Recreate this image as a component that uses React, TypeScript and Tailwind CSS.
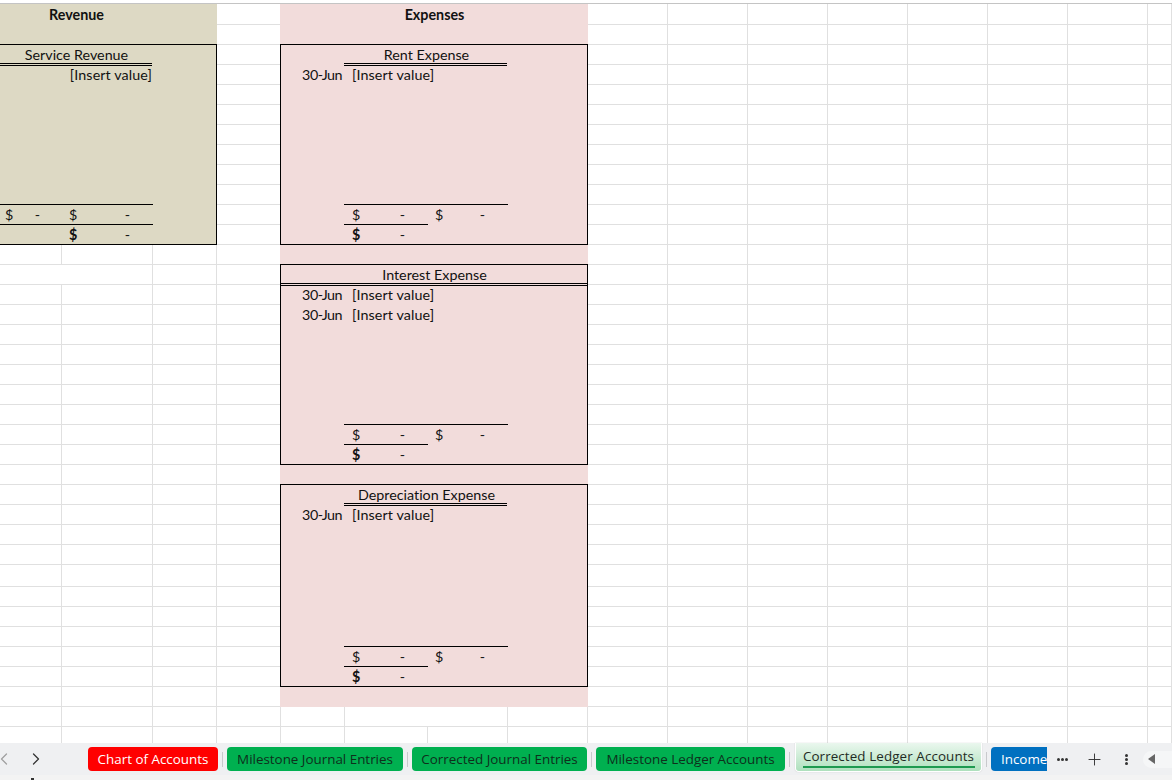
import { ChevronLeft, ChevronRight, Plus } from "lucide-react";

const COLS = 16;
const ROWS = 38;

const sheetFont = "font-['Lato','Liberation_Sans',sans-serif] text-[14.3px] text-[#111] [font-variant-ligatures:none]";
const tabFont = "font-['Open_Sans','Liberation_Sans',sans-serif] text-[13.4px]";

function Text({ className, children }: { className: string; children: React.ReactNode }) {
  return <div className={`flex items-center whitespace-nowrap ${className}`}>{children}</div>;
}

function Amount({ className, bold }: { className: string; bold?: boolean }) {
  return (
    <div className={`flex items-center justify-between ${className}`}>
      <span className={bold ? "font-bold" : ""}>$</span>
      <span>-</span>
    </div>
  );
}

function ExpenseBoxes() {
  return (
    <>
      {/* Rent Expense */}
      <div className="col-start-5 col-end-9 row-start-4 row-end-14 -ml-px -mt-px border border-black" />
      <Text className="col-start-6 col-end-8 row-start-4 justify-center">Rent Expense</Text>
      <div className="col-start-6 col-end-8 row-start-4 self-end -ml-px mr-px -mb-[1px] h-[3px] border-y border-black" />
      <Text className="col-start-5 row-start-5 justify-end pr-[3px] tracking-[-0.5px]">30-Jun</Text>
      <Text className="col-start-6 col-end-8 row-start-5 pl-[7px] tracking-[0.1px]">[Insert value]</Text>
      <div className="col-start-6 col-end-8 row-start-11 -ml-px border-b border-black" />
      <Amount className="col-start-6 row-start-12 -ml-px border-b border-black pl-[8px] pr-[23px]" />
      <Amount className="col-start-7 row-start-12 pl-[7px] pr-[23px]" />
      <Amount className="col-start-6 row-start-13 -ml-px pl-[8px] pr-[23px]" bold />

      {/* Interest Expense */}
      <div className="col-start-5 col-end-9 row-start-15 row-end-25 -ml-px -mt-px border border-black" />
      <Text className="col-start-5 col-end-9 row-start-15 justify-center">Interest Expense</Text>
      <div className="col-start-5 col-end-9 row-start-15 self-end -ml-px -mb-[1px] h-[3px] border-y border-black" />
      <Text className="col-start-5 row-start-16 justify-end pr-[3px] tracking-[-0.5px]">30-Jun</Text>
      <Text className="col-start-6 col-end-8 row-start-16 pl-[7px] tracking-[0.1px]">[Insert value]</Text>
      <Text className="col-start-5 row-start-17 justify-end pr-[3px] tracking-[-0.5px]">30-Jun</Text>
      <Text className="col-start-6 col-end-8 row-start-17 pl-[7px] tracking-[0.1px]">[Insert value]</Text>
      <div className="col-start-6 col-end-8 row-start-22 -ml-px border-b border-black" />
      <Amount className="col-start-6 row-start-23 -ml-px border-b border-black pl-[8px] pr-[23px]" />
      <Amount className="col-start-7 row-start-23 pl-[7px] pr-[23px]" />
      <Amount className="col-start-6 row-start-24 -ml-px pl-[8px] pr-[23px]" bold />

      {/* Depreciation Expense */}
      <div className="col-start-5 col-end-9 row-start-26 row-end-36 -ml-px -mt-px border border-black" />
      <Text className="col-start-6 col-end-8 row-start-26 justify-center">Depreciation Expense</Text>
      <div className="col-start-6 col-end-8 row-start-26 self-end -ml-px mr-px -mb-[1px] h-[3px] border-y border-black" />
      <Text className="col-start-5 row-start-27 justify-end pr-[3px] tracking-[-0.5px]">30-Jun</Text>
      <Text className="col-start-6 col-end-8 row-start-27 pl-[7px] tracking-[0.1px]">[Insert value]</Text>
      <div className="col-start-6 col-end-8 row-start-33 -ml-px border-b border-black" />
      <Amount className="col-start-6 row-start-34 -ml-px border-b border-black pl-[8px] pr-[23px]" />
      <Amount className="col-start-7 row-start-34 pl-[7px] pr-[23px]" />
      <Amount className="col-start-6 row-start-35 -ml-px pl-[8px] pr-[23px]" bold />
    </>
  );
}

function cellClass(r: number, c: number) {
  if (r === 0) return "border-b border-[#c4c4c4]";
  if (r === ROWS - 1) return "border-r border-[#e0e0e0]";
  // merged cells have no inner line
  if ((r === 14 && c === 0) || (r === 36 && c === 5)) return "border-b border-[#e0e0e0]";
  return "border-r border-b border-[#e0e0e0]";
}

function Sheet() {
  const cells = [];
  for (let r = 0; r < ROWS; r++) {
    for (let c = 0; c < COLS; c++) {
      cells.push(<div key={`${r}-${c}`} className={cellClass(r, c)} style={{ gridRow: r + 1, gridColumn: c + 1 }} />);
    }
  }

  return (
    <div className={`grid grid-cols-[62px_91px_64px_64px_64px_83px_80px_80px_80px_80px_80px_80px_80px_80px_80px_24px] grid-rows-[4px_21px_repeat(27,20px)_22px_repeat(7,20px)_16px] overflow-hidden ${sheetFont}`}>
      {cells}

      {/* fills */}
      <div className="col-start-1 col-end-4 row-start-2 row-end-14 bg-[#ddd9c4]" />
      <div className="col-start-5 col-end-9 row-start-2 row-end-37 -ml-px bg-[#f2dcdb]" />

      {/* Revenue */}
      <Text className="col-start-1 col-end-3 row-start-2 justify-center font-bold">Revenue</Text>
      <div className="col-start-1 col-end-4 row-start-4 row-end-14 -mt-px border-y border-r border-black" />
      <Text className="col-start-1 col-end-3 row-start-4 justify-center">Service Revenue</Text>
      <div className="col-start-1 col-end-3 row-start-4 self-end mr-px -mb-[1px] h-[3px] border-y border-black" />
      <Text className="col-start-2 row-start-5 justify-end pr-px tracking-[0.1px]">[Insert value]</Text>
      <div className="col-start-1 col-end-3 row-start-11 border-b border-black" />
      <Amount className="col-start-1 row-start-12 border-b border-black pl-[5px] pr-[22px]" />
      <Amount className="col-start-2 row-start-12 border-b border-black pl-[7px] pr-[23px]" />
      <Amount className="col-start-2 row-start-13 pl-[7px] pr-[23px]" bold />

      {/* Expenses */}
      <Text className="col-start-5 col-end-9 row-start-2 justify-center font-bold">Expenses</Text>
      <ExpenseBoxes />
    </div>
  );
}

function Sep() {
  return <div className="mx-[4px] h-[15px] w-px shrink-0 bg-[#c8c9cc]" />;
}

function Tab({ className, label }: { className: string; label: string }) {
  return (
    <div className={`flex h-[24px] shrink-0 items-center justify-center overflow-hidden rounded-[4px] whitespace-nowrap ${className}`}>
      {label}
    </div>
  );
}

function TabBar() {
  return (
    <div className={`flex h-[32px] items-center bg-[#eff0f2] ${tabFont}`}>
      <ChevronLeft className="ml-[-6px] h-[20px] w-[20px] shrink-0 text-[#a0a0a0]" strokeWidth={1.5} />
      <ChevronRight className="ml-[12px] h-[20px] w-[20px] shrink-0 text-[#333]" strokeWidth={1.5} />
      <Tab className="ml-[42px] w-[130px] bg-[#ff0000] text-white" label="Chart of Accounts" />
      <Sep />
      <Tab className="w-[176px] bg-[#00b050] text-[#0e2f1c]" label="Milestone Journal Entries" />
      <Sep />
      <Tab className="w-[175px] bg-[#00b050] text-[#0e2f1c]" label="Corrected Journal Entries" />
      <Sep />
      <Tab className="w-[189px] bg-[#00b050] text-[#0e2f1c]" label="Milestone Ledger Accounts" />
      <Sep />
      <div className="-mt-[3px] ml-px flex h-[29px] w-[187px] shrink-0 flex-col items-center rounded-b-[4px] border-x border-b border-white bg-gradient-to-b from-[#eaf7ee] to-[#aee0bd] font-medium tracking-[0.1px] text-[#1f2a24] shadow-[0_0_1px_#aaa]">
        <span className="mt-[3px] leading-[20px] whitespace-nowrap">Corrected Ledger Accounts</span>
        <div className="h-[2px] w-[172px] bg-[#1e9a50]" />
      </div>
      <Sep />
      <div className="flex h-[24px] w-[56px] shrink-0 items-center overflow-hidden rounded-l-[4px] bg-[#0070c0] pl-[10px] text-white">Income</div>
      <div className="ml-[10px] flex h-[16px] w-[11px] shrink-0 items-center justify-between">
        <span className="h-[3px] w-[3px] rounded-full bg-[#333]" />
        <span className="h-[3px] w-[3px] rounded-full bg-[#333]" />
        <span className="h-[3px] w-[3px] rounded-full bg-[#333]" />
      </div>
      <Plus className="ml-[17px] h-[19px] w-[19px] shrink-0 text-[#333]" strokeWidth={1.2} />
      <div className="ml-[21px] flex h-[11px] shrink-0 flex-col justify-between">
        <span className="h-[3px] w-[3px] rounded-full bg-[#333]" />
        <span className="h-[3px] w-[3px] rounded-full bg-[#333]" />
        <span className="h-[3px] w-[3px] rounded-full bg-[#333]" />
      </div>
      <div className="ml-[15px] flex h-[17px] flex-1 items-center rounded-l-full bg-[#f5f6f7] pl-[5px]">
        <div className="h-0 w-0 border-y-[5px] border-r-[7px] border-y-transparent border-r-[#666]" />
      </div>
    </div>
  );
}

export default function App() {
  return (
    <div className="h-[780px] w-[1172px] overflow-hidden bg-white">
      <Sheet />
      <TabBar />
      <div className="h-[5px] bg-[#f3f3f3] pt-[3px] pl-[31px]">
        <div className="h-[2px] w-[3px] bg-[#333]" />
      </div>
    </div>
  );
}
